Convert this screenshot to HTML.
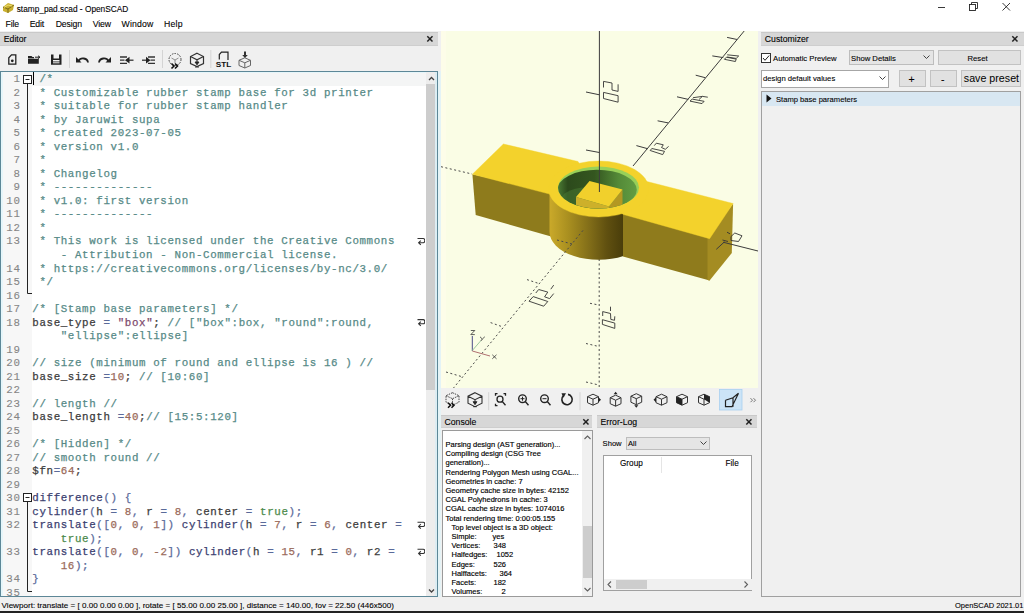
<!DOCTYPE html>
<html><head><meta charset="utf-8">
<style>
*{box-sizing:border-box}
html,body{margin:0;padding:0}
body{width:1024px;height:613px;overflow:hidden;position:relative;background:#f0f0f0;font-family:"Liberation Sans",sans-serif;color:#000}
.a{position:absolute}
.t{position:absolute;white-space:nowrap;line-height:1;font-size:8.1px;color:#000;-webkit-text-stroke:0.1px #000}
.dt{position:absolute;background:#d7d7d7;height:13.8px;border-top:1px solid #c9c9c9;border-bottom:1px solid #cecece}
.code{position:absolute;left:31.3px;top:1.3px;-webkit-text-stroke:0.25px currentColor;font-family:"Liberation Mono",monospace;font-size:10.8px;letter-spacing:0.634px;line-height:13.51px;white-space:pre;color:#3c3c3c}
.ln{position:absolute;left:0;top:1.3px;width:19.5px;text-align:right;font-family:"Liberation Mono",monospace;font-size:10.8px;letter-spacing:0.634px;line-height:13.51px;white-space:pre;color:#858585;-webkit-text-stroke:0.1px currentColor}
.c{color:#568a87}
.n{color:#9a6a5a}
.s{color:#7d4a6c}
.k{color:#3b4070}
.o{color:#5a6a9a}
.g{color:#4c8a4c}
.btn{position:absolute;background:#e1e1e1;border:1px solid #c2c2c2}
.combo{position:absolute;background:#e5e5e5;border:1px solid #bdbdbd}
.ico{position:absolute}
.con{position:absolute;left:2.5px;font-size:7.5px;white-space:nowrap;line-height:1;color:#000;-webkit-text-stroke:0.15px #000}
</style></head><body>
<!-- title + menu -->
<div class="a" style="left:0;top:0;width:1024px;height:31px;background:#fff"></div>
<svg class="a" style="left:2px;top:2px" width="13" height="12" viewBox="0 0 13 12">
<path d="M1,5 L6,1 L12,3 L11,8 L6,11 L1,9 Z" fill="#c9b030"/><path d="M1,5 L6,7 L12,3 M6,7 L6,11" stroke="#6a5a10" stroke-width="0.8" fill="none"/><path d="M2,5.5 L6,3 L10,4" stroke="#f0e070" stroke-width="1" fill="none"/></svg>
<div class="t" style="left:16.7px;top:5px;font-size:8.3px">stamp_pad.scad - OpenSCAD</div>
<div class="t" style="left:5.6px;top:19.5px;font-size:8.7px;letter-spacing:-0.15px">File</div>
<div class="t" style="left:29.7px;top:19.5px;font-size:8.7px;letter-spacing:-0.15px">Edit</div>
<div class="t" style="left:55.7px;top:19.5px;font-size:8.7px;letter-spacing:-0.15px">Design</div>
<div class="t" style="left:92.8px;top:19.5px;font-size:8.7px;letter-spacing:-0.15px">View</div>
<div class="t" style="left:121.5px;top:19.5px;font-size:8.7px;letter-spacing:0.2px">Window</div>
<div class="t" style="left:164px;top:19.5px;font-size:8.7px;letter-spacing:0.2px">Help</div>
<svg class="a" style="left:930px;top:0" width="94" height="16">
<g stroke="#222" stroke-width="0.9" fill="none">
<line x1="8" y1="7.5" x2="15" y2="7.5"/>
<rect x="39.5" y="4.5" width="6" height="6"/><path d="M41.5,4.5 V2.5 H47.5 V8.5 H45.5"/>
<path d="M72.5,3 L80,10.5 M80,3 L72.5,10.5"/>
</g></svg>

<!-- ================= EDITOR DOCK ================= -->
<div class="dt" style="left:0;top:32px;width:438px"></div>
<div class="t" style="left:3.8px;top:35.2px;font-size:8.7px">Editor</div>
<svg class="a" style="left:426px;top:35px" width="8" height="8"><path d="M1.3,1.3 L6.5,6.5 M6.5,1.3 L1.3,6.5" stroke="#222" stroke-width="1.5"/></svg>
<!-- editor toolbar -->
<svg class="a" style="left:0;top:46px" width="438" height="25" viewBox="0 46 438 25">
<g fill="#222" stroke="#222">
<!-- new -->
<path d="M11.5,54.8 H15.8 V64.1 H8.8 V57.8 Z" fill="none" stroke-width="1.3"/>
<circle cx="12.3" cy="60.8" r="1.4" stroke="none"/>
<!-- open -->
<path d="M28,56 H31.5 L32.5,57 H34 V58.2 H28 Z M28,58.8 H38.8 V63.7 H28 Z" stroke="none"/>
<path d="M35,57.2 H39.5 M38,55.8 L40,57.2 L38,58.6" fill="none" stroke-width="1"/>
<!-- save -->
<path d="M51,54.5 H53.5 V58.5 H59 V54.5 H61.5 V64.7 H51 Z" stroke="none"/>
<rect x="53" y="60" width="6.5" height="1.5" fill="#f0f0f0" stroke="none"/>
<rect x="53" y="62.3" width="6.5" height="1" fill="#f0f0f0" stroke="none"/>
</g>
<line x1="69.5" y1="50" x2="69.5" y2="68" stroke="#d4d4d4"/>
<g fill="none" stroke="#222" stroke-width="1.8">
<path d="M78.5,61 A5,4.5 0 0 1 88,62.5"/>
<path d="M108.5,61 A5,4.5 0 0 0 99,62.5"/>
</g>
<g fill="#222">
<path d="M76,57 L76,62.5 L81.5,62.5 Z"/>
<path d="M111,57 L111,62.5 L105.5,62.5 Z"/>
</g>
<g stroke="#333" stroke-width="1.3" fill="none">
<path d="M120,57 H127 M120,60.2 H124.5 M120,63.4 H127"/>
<path d="M126,60.2 H133.5"/>
</g>
<path d="M125,60.2 L129.5,56.8 V63.6 Z" fill="#222"/>
<g stroke="#333" stroke-width="1.3" fill="none">
<path d="M148,57 H155 M150.5,60.2 H155 M148,63.4 H155"/>
<path d="M142,60.2 H149"/>
</g>
<path d="M150.5,60.2 L146,56.8 V63.6 Z" fill="#222"/>
<line x1="162.5" y1="50" x2="162.5" y2="68" stroke="#d4d4d4"/>
<circle cx="175" cy="59.5" r="6" fill="none" stroke="#444" stroke-width="1" stroke-dasharray="1.6 1.1"/>
<path d="M171.5,58 L175,60 L178.5,58 M175,60 V63" fill="none" stroke="#666" stroke-width="0.7"/>
<path d="M171.5,63.5 L174,66 L171.5,68.5 M175,63.5 L177.5,66 L175,68.5" fill="none" stroke="#111" stroke-width="1.6"/>
<g fill="none" stroke="#333" stroke-width="1.2">
<path d="M197,53.2 L203.5,56.5 L203.5,63.5 L197,66.5 L190.5,63.5 L190.5,56.5 Z"/>
<path d="M190.5,56.5 L197,59.8 L203.5,56.5 M197,59.8 V63"/>
</g>
<path d="M195,62 H199 L197,64.8 Z M195,67 H199" fill="#222" stroke="#222" stroke-width="0.9"/>
<line x1="210.8" y1="50" x2="210.8" y2="68" stroke="#d4d4d4"/>
<path d="M219.3,59.5 V54.5 L221.5,52.2 H228 V60" fill="none" stroke="#222" stroke-width="1.2"/>
<text x="215.8" y="66.6" font-family="Liberation Sans" font-weight="bold" font-size="7.2" fill="#111" textLength="15.5" lengthAdjust="spacingAndGlyphs">STL</text>
<g fill="none" stroke="#666" stroke-width="1">
<path d="M244.8,57.8 L250.5,60.3 V65.5 L244.8,68 L239,65.5 V60.3 Z M239,60.3 L244.8,62.8 L250.5,60.3 M244.8,62.8 V68"/>
</g>
<path d="M244,51.5 H246 V55 H247.8 L245,58 L242.2,55 H244 Z" fill="#333"/>
</svg>

<!-- editor frame -->
<div class="a" style="left:0;top:71px;width:438px;height:526px;border:1px solid #5d8797;background:#fff;overflow:hidden">
<div class="a" style="left:0;top:0;width:436px;height:2px;background:#e6f6fa"></div>
<div class="a" style="left:0;top:0;width:2px;height:524px;background:#e6f6fa"></div>
<div class="a" style="left:2px;top:0;width:29px;height:524px;background:#f7f7f7"></div>
<div class="a" style="left:31px;top:1px;width:394px;height:13px;background:#f4f5f5"></div>
<div class="ln">1
2
3
4
5
6
7
8
9
10
11
12
13

14
15
16
17
18

19
20
21
22
23
24
25
26
27
28
29
30
31
32

33

34
35</div>
<div class="code"><span class="c"> /*</span>
<span class="c"> * Customizable rubber stamp base for 3d printer</span>
<span class="c"> * suitable for rubber stamp handler</span>
<span class="c"> * by Jaruwit supa</span>
<span class="c"> * created 2023-07-05</span>
<span class="c"> * version v1.0</span>
<span class="c"> *</span>
<span class="c"> * Changelog</span>
<span class="c"> * --------------</span>
<span class="c"> * v1.0: first version</span>
<span class="c"> * --------------</span>
<span class="c"> *</span>
<span class="c"> * This work is licensed under the Creative Commons</span>
<span class="c">    - Attribution - Non-Commercial license.</span>
<span class="c"> * https://creativecommons.org/licenses/by-nc/3.0/</span>
<span class="c"> */</span>

<span class="c">/* [Stamp base parameters] */</span>
base_type <span class="o">=</span> <span class="s">"box"</span>;<span class="c"> // ["box":box, "round":round,</span>
<span class="c">    "ellipse":ellipse]</span>

<span class="c">// size (minimum of round and ellipse is 16 ) //</span>
base_size <span class="o">=</span><span class="n">10</span>;<span class="c"> // [10:60]</span>

<span class="c">// length //</span>
base_length <span class="o">=</span><span class="n">40</span>;<span class="c">// [15:5:120]</span>

<span class="c">/* [Hidden] */</span>
<span class="c">// smooth round //</span>
$fn<span class="o">=</span><span class="n">64</span>;

<span class="k">difference</span><span class="o">() {</span>
<span class="k">cylinder</span><span class="o">(</span>h <span class="o">=</span> <span class="n">8</span><span class="o">,</span> r <span class="o">=</span> <span class="n">8</span><span class="o">,</span> center <span class="o">=</span> <span class="g">true</span><span class="o">);</span>
<span class="k">translate</span><span class="o">([</span><span class="n">0</span><span class="o">,</span> <span class="n">0</span><span class="o">,</span> <span class="n">1</span><span class="o">]) </span><span class="k">cylinder</span><span class="o">(</span>h <span class="o">=</span> <span class="n">7</span><span class="o">,</span> r <span class="o">=</span> <span class="n">6</span><span class="o">,</span> center <span class="o">=</span>
    <span class="g">true</span><span class="o">);</span>
<span class="k">translate</span><span class="o">([</span><span class="n">0</span><span class="o">,</span> <span class="n">0</span><span class="o">,</span> <span class="n">-2</span><span class="o">]) </span><span class="k">cylinder</span><span class="o">(</span>h <span class="o">=</span> <span class="n">15</span><span class="o">,</span> r1 <span class="o">=</span> <span class="n">0</span><span class="o">,</span> r2 <span class="o">=</span>
    <span class="n">16</span><span class="o">);</span>
<span class="o">}</span>
</div>
<div class="a" style="left:32px;top:0px;width:1px;height:13px;background:#000"></div>
<svg class="a" style="left:0;top:0" width="424" height="524">
<g stroke="#222" fill="none" stroke-width="1">
<rect x="22.5" y="3.5" width="8" height="8" fill="#fff"/>
<line x1="24.5" y1="7.5" x2="28.5" y2="7.5"/>
<line x1="26.5" y1="11.5" x2="26.5" y2="221.5"/>
<line x1="26.5" y1="221.5" x2="31" y2="221.5"/>
<rect x="22.5" y="421.5" width="8" height="8" fill="#fff"/>
<line x1="24.5" y1="425.5" x2="28.5" y2="425.5"/>
<line x1="26.5" y1="429.5" x2="26.5" y2="519.5"/>
<line x1="26.5" y1="519.5" x2="31" y2="519.5"/>
</g>
<g fill="none" stroke="#333" stroke-width="1.1">
<path d="M416.5,166.52 H422.3 Q423.8,166.52 423.8,168.62 Q423.8,170.72 422.3,170.72 H417.6 M419.8,168.52 L417.6,170.72 L419.8,172.92"/>
<path d="M416.5,247.58 H422.3 Q423.8,247.58 423.8,249.68 Q423.8,251.78 422.3,251.78 H417.6 M419.8,249.58 L417.6,251.78 L419.8,253.98"/>
<path d="M416.5,450.23 H422.3 Q423.8,450.23 423.8,452.33 Q423.8,454.43 422.3,454.43 H417.6 M419.8,452.23 L417.6,454.43 L419.8,456.63"/>
<path d="M416.5,477.25 H422.3 Q423.8,477.25 423.8,479.35 Q423.8,481.45 422.3,481.45 H417.6 M419.8,479.25 L417.6,481.45 L419.8,483.65"/>
</g>
</svg>
<!-- scrollbar -->
<div class="a" style="left:424.8px;top:0;width:9.5px;height:524px;background:#ededed"></div>
<div class="a" style="left:434.3px;top:0;width:2.7px;height:524px;background:#dcedf3"></div>
<div class="a" style="left:424.8px;top:12px;width:9.5px;height:306px;background:#cdcdcd"></div>
<svg class="a" style="left:423.5px;top:0" width="13" height="524">
<path d="M4,8 L6.5,5.5 L9,8" fill="none" stroke="#444" stroke-width="1.3"/>
<path d="M4,517.5 L6.5,520 L9,517.5" fill="none" stroke="#444" stroke-width="1.3"/>
</svg>
</div>

<!-- ================= VIEWER ================= -->
<div class="a" style="left:438px;top:71px;width:3px;height:526px;background:#e4f3f6"></div>
<svg class="a" style="left:441px;top:31px" width="317" height="357" viewBox="441 31 317 357">
<defs>
<linearGradient id="cyl" x1="549" y1="0" x2="624" y2="0" gradientUnits="userSpaceOnUse">
<stop offset="0" stop-color="#cbaa2a"/>
<stop offset="0.25" stop-color="#aa9020"/>
<stop offset="0.55" stop-color="#806c18"/>
<stop offset="0.77" stop-color="#605010"/>
<stop offset="1" stop-color="#483c0a"/>
</linearGradient>
<linearGradient id="hole" x1="558" y1="0" x2="639" y2="0" gradientUnits="userSpaceOnUse">
<stop offset="0" stop-color="#4a7a34"/>
<stop offset="0.12" stop-color="#2c4a1c"/>
<stop offset="0.45" stop-color="#34561f"/>
<stop offset="0.75" stop-color="#548a38"/>
<stop offset="1" stop-color="#64a044"/>
</linearGradient>
</defs>
<rect x="441" y="31" width="317" height="357" fill="#fafde5"/>
<rect x="441" y="31" width="5" height="357" fill="#fdfde9"/>
<!-- negative axes dotted (behind) -->
<g stroke="#4a4a4a" stroke-width="1" stroke-dasharray="2 2.5" fill="none">
<line x1="441" y1="166.7" x2="472" y2="174"/>
<line x1="599.2" y1="259" x2="599.2" y2="388"/>
<line x1="590" y1="303.3" x2="598.8" y2="305"/>
<line x1="586" y1="343.5" x2="598.8" y2="346.5"/>
<line x1="586" y1="382" x2="598.8" y2="385"/>
</g>
<!-- left box front face -->
<polygon points="472.4,174.2 552,192.5 552,236.8 475.7,215" fill="#8e7b1c"/>
<!-- cylinder side -->
<path d="M549.5,185 L549.5,231.5 A49.2,28 0 0 0 623.5,256 L623.5,205 Z" fill="url(#cyl)"/>
<!-- right box front face -->
<polygon points="623,212 709.6,236 709.6,280.5 623,256.5" fill="#8f7b1c"/>
<!-- right box end face -->
<polygon points="707.5,238 733.1,203.5 731.8,253 709.6,280.5 707.5,280" fill="#a48c22"/>
<!-- top faces -->
<g fill="#f3d22c" stroke="#f3d22c" stroke-width="0.4">
<polygon points="503.4,144 578,161.5 600,200 548.5,193.8 472.4,174.2"/>
<polygon points="641,180 733.1,203.5 709.6,238.7 623.5,214.5 600,200"/>
<ellipse cx="598.7" cy="189" rx="50" ry="28"/>
</g>
<!-- hole -->
<clipPath id="hc"><ellipse cx="598.5" cy="187.6" rx="40.5" ry="21"/></clipPath>
<ellipse cx="598.5" cy="187.6" rx="40.5" ry="21" fill="#98d058"/>
<g clip-path="url(#hc)"><ellipse cx="597" cy="189.8" rx="39.8" ry="20" fill="url(#hole)"/>
<ellipse cx="592" cy="198" rx="30" ry="11" fill="#4e8038" opacity="0.45"/></g>
<g clip-path="url(#hc)">
<polygon points="576,197 609,206.5 609,222 576,213" fill="#cdb02a"/>
<polygon points="609,206.5 622.5,189.5 622.5,216 609,222" fill="#b39822"/>
<polygon points="576,197 589.5,181 622.5,189.5 609,206.5" fill="#f1d02c"/>
</g>
<!-- positive axes -->
<g stroke="#3c3c3c" stroke-width="1" fill="none">
<line x1="599.4" y1="31" x2="599.4" y2="192"/>
<line x1="586" y1="92" x2="599.4" y2="94.8"/>
<line x1="586" y1="150" x2="599.4" y2="152.5"/>
<line x1="633" y1="166" x2="745" y2="30"/>
<line x1="636.4" y1="145.6" x2="648" y2="148.8"/>
<line x1="657.6" y1="120.8" x2="668.2" y2="122.9"/>
<line x1="677" y1="96.8" x2="688.3" y2="99.4"/>
<line x1="695.7" y1="75.2" x2="705.3" y2="77.7"/>
<line x1="712.3" y1="55.9" x2="723.3" y2="57.6"/>
<line x1="727.1" y1="37.4" x2="737.1" y2="39.5"/>
<line x1="723" y1="242.2" x2="758" y2="251"/>
<line x1="716.3" y1="249.3" x2="724.5" y2="241.8"/>
</g>
<!-- labels -->
<g stroke="#333" stroke-width="0.9" fill="none" stroke-linejoin="miter">
<path d="M603.5,87.5 L603.5,81.4 L612,83 L612,90 L618.1,91.4 L618.1,84.3 M603.5,92.4 L618.1,95.7 L618.1,102.2 L603.5,98.5 Z"/>
<path d="M650.2,150.5 L651.8,148.5 L664.5,151.3 L662.7,154.6 Z M654.3,145.6 L656.3,143.2 L663.3,144.8 L661.5,147.5 L665.3,149.3 L668.6,146.4"/>
<path d="M690,101.1 L692.2,99.1 L704.1,101.3 L702,103.6 Z M693,97.7 L702.4,96.4 L707.8,97.2 M699,99.5 L702.4,96.4"/>
<path d="M724.4,59.3 L726.4,57.2 L736.2,59.1 L735.4,61.5 Z M727.2,54.8 L738.7,56 L736.2,58.4 L727.2,57"/>
<path d="M731,236.5 L734.8,233 L742,235.8 L738.5,241.5 L731,240.5 Z M727,232.2 L730,233.8 M722.5,240 L728,241.5"/>
<path d="M529,301.2 L533.2,296.6 L547.8,301.5 L543.7,306.2 Z M535.8,293 L538.7,289.5 L547.8,292.1 L544.6,296.8 L549.6,298.6 L553.7,293.6 M550.8,289.2 L553.7,285.1"/>
<path d="M610.5,306.7 L610.5,311 M602.7,316 L602.7,311.6 L610.5,313.5 L610.8,319.4 L614.5,320.3 L614.8,316.3 M602.4,319.7 L614.8,323.1 L614.8,328.4 L602.4,324.4 Z"/>
</g>
<!-- -Y dotted (front) -->
<g stroke="#4a4a4a" stroke-width="1" stroke-dasharray="2 2.5" fill="none">
<line x1="583" y1="230.4" x2="453.5" y2="388"/>
<line x1="557" y1="240" x2="572" y2="244"/>
<line x1="527" y1="279.6" x2="538.8" y2="283.5"/>
<line x1="490.6" y1="322.6" x2="503" y2="327"/>
<line x1="446" y1="372" x2="463" y2="377"/>
</g>
<!-- axes indicator -->
<g stroke-width="1" fill="none">
<line x1="472.3" y1="351" x2="472.3" y2="336" stroke="#4a4a88"/>
<line x1="472.3" y1="350.5" x2="481" y2="340.5" stroke="#9cc89c"/>
<line x1="472.3" y1="351" x2="490" y2="356" stroke="#b07070"/>
</g>
<g stroke="#333" stroke-width="0.8" fill="none">
<path d="M470.8,330.5 L474.8,330.5 L470.8,334.6 L474.8,334.6"/>
<path d="M480,336.8 L482.3,339 L484.8,336.8 M482.3,339 L480.8,341"/>
<path d="M492.3,354.8 L496.5,358.8 M496.5,354.8 L492.3,358.8"/>
</g>
</svg>

<!-- viewer toolbar -->
<svg class="a" style="left:441px;top:388px" width="317" height="25" viewBox="441 388 317 25">
<rect x="441" y="388" width="317" height="25" fill="#f0f0f0"/>
<rect x="719.5" y="389.5" width="22.5" height="20.5" fill="#cce4f7" stroke="#a8d0f0" stroke-width="0.8"/>
<g transform="translate(0,1.2)">
<!-- preview -->
<g fill="none" stroke="#333" stroke-width="0.9" stroke-dasharray="1.5 1">
<path d="M452.5,391.5 L459,394.5 L459,401 L452.5,404 L446,401 L446,394.5 Z M446,394.5 L452.5,397.5 L459,394.5 M452.5,397.5 V404"/>
</g>
<path d="M448,401.5 L450.5,404 L448,406.5 M451.5,401.5 L454,404 L451.5,406.5" fill="none" stroke="#111" stroke-width="1.5"/>
<!-- render -->
<g fill="none" stroke="#333" stroke-width="1.1">
<path d="M475,391.5 L482,395 L482,402 L475,405.5 L468,402 L468,395 Z M468,395 L475,398.5 L482,395 M475,398.5 V402"/>
</g>
<path d="M473,400.5 H477 L475,403.5 Z M473,405.5 H477" fill="#222" stroke="#222" stroke-width="0.8"/>
<line x1="488.7" y1="391" x2="488.7" y2="409" stroke="#d4d4d4"/>
<!-- view all -->
<g fill="none" stroke="#222" stroke-width="1.3">
<path d="M495.5,394.5 V392.5 H497.5 M503.5,392.5 H505.5 V394.5 M495.5,402.5 V404.5 H497.5"/>
<circle cx="500" cy="398" r="3"/>
<path d="M502.3,400.3 L505.5,404"/>
</g>
<!-- zoom in -->
<g fill="none" stroke="#222" stroke-width="1.4">
<circle cx="522.5" cy="397.5" r="3.8"/>
<path d="M525.3,400.3 L528.5,404"/>
<path d="M520.5,397.5 H524.5 M522.5,395.5 V399.5" stroke-width="1"/>
</g>
<!-- zoom out -->
<g fill="none" stroke="#222" stroke-width="1.4">
<circle cx="544.5" cy="397.5" r="3.8"/>
<path d="M547.3,400.3 L550.5,404"/>
<path d="M542.5,397.5 H546.5" stroke-width="1"/>
</g>
<!-- reset -->
<path d="M563.5,394.5 A5.2,5.2 0 1 0 568,393.2" fill="none" stroke="#222" stroke-width="1.6"/>
<path d="M561.5,392 L566,392 L563.5,396.5 Z" fill="#222"/>
<line x1="580" y1="391" x2="580" y2="409" stroke="#d4d4d4"/>
<!-- view cubes -->
<g fill="none" stroke="#333" stroke-width="1">
<path d="M593,393 L598.5,395.5 V401.5 L593,404 L587.5,401.5 V395.5 Z M587.5,395.5 L593,398 L598.5,395.5 M593,398 V404"/>
<path d="M615.6,394 L621,396.5 V402.5 L615.6,405 L610.2,402.5 V396.5 Z M610.2,396.5 L615.6,399 L621,396.5 M615.6,399 V405"/>
<path d="M636.3,392.5 L641.7,395 V401 L636.3,403.5 L630.9,401 V395 Z M630.9,395 L636.3,397.5 L641.7,395 M636.3,397.5 V403.5"/>
<path d="M661.5,393 L667,395.5 V401.5 L661.5,404 L656,401.5 V395.5 Z M656,395.5 L661.5,398 L667,395.5 M661.5,398 V404"/>
<path d="M682,393 L687.5,395.5 V401.5 L682,404 L676.5,401.5 V395.5 Z M676.5,395.5 L682,398 L687.5,395.5 M682,398 V404"/>
<path d="M704,393 L709.5,395.5 V401.5 L704,404 L698.5,401.5 V395.5 Z M698.5,395.5 L704,398 L709.5,395.5 M704,398 V404"/>
</g>
<path d="M598.5,396 L601,398.5 L598.5,401 Z" fill="#222"/>
<path d="M613.6,393 L615.6,390.5 L617.6,393 Z" fill="#222"/>
<path d="M634.3,404 L636.3,406.5 L638.3,404 Z" fill="#222"/>
<path d="M656,396 L653.5,398.5 L656,401 Z" fill="#222"/>
<path d="M676.5,395.5 L682,398 V404 L676.5,401.5 Z" fill="#222"/>
<path d="M704,393 L709.5,395.5 V401.5 L704,398 Z" fill="#222"/>
<!-- perspective highlighted -->
<g fill="none" stroke="#222" stroke-width="1.2">
<path d="M725.5,399 L733,396.5 L738.5,392 M725.5,399 V405.5 L732,405.5 L738.5,392 M733,396.5 V405.5"/>
</g>
<path d="M750.5,397 L752.5,399 L750.5,401 M753.5,397 L755.5,399 L753.5,401" fill="none" stroke="#555" stroke-width="0.8"/>
</g>
</svg>

<!-- ================= CONSOLE ================= -->
<div class="dt" style="left:441px;top:414.5px;width:151px"></div>
<div class="t" style="left:444.5px;top:417.5px;font-size:8.7px">Console</div>
<svg class="a" style="left:581.5px;top:418px" width="8" height="8"><path d="M1.3,1.3 L6.5,6.5 M6.5,1.3 L1.3,6.5" stroke="#222" stroke-width="1.5"/></svg>
<div class="a" style="left:442px;top:430px;width:151px;height:167px;background:#fff;border:1px solid #9a9a9a;overflow:hidden">
<div class="con" style="top:10.0px">Parsing design (AST generation)...</div>
<div class="con" style="top:19.2px">Compiling design (CSG Tree</div>
<div class="con" style="top:28.4px">generation)...</div>
<div class="con" style="top:37.6px">Rendering Polygon Mesh using CGAL...</div>
<div class="con" style="top:46.8px">Geometries in cache: 7</div>
<div class="con" style="top:56.0px">Geometry cache size in bytes: 42152</div>
<div class="con" style="top:65.2px">CGAL Polyhedrons in cache: 3</div>
<div class="con" style="top:74.4px">CGAL cache size in bytes: 1074016</div>
<div class="con" style="top:83.6px">Total rendering time: 0:00:05.155</div>
<div class="con" style="top:92.8px;left:8.5px">Top level object is a 3D object:</div>
<div class="con" style="top:102.0px;left:8.5px">Simple:</div><div class="con" style="top:102.0px;left:49.5px">yes</div>
<div class="con" style="top:111.2px;left:8.5px">Vertices:</div><div class="con" style="top:111.2px;left:50.5px">348</div>
<div class="con" style="top:120.4px;left:8.5px">Halfedges:</div><div class="con" style="top:120.4px;left:53.5px">1052</div>
<div class="con" style="top:129.6px;left:8.5px">Edges:</div><div class="con" style="top:129.6px;left:50.5px">526</div>
<div class="con" style="top:138.8px;left:8.5px">Halffacets:</div><div class="con" style="top:138.8px;left:56.5px">364</div>
<div class="con" style="top:148.0px;left:8.5px">Facets:</div><div class="con" style="top:148.0px;left:50.5px">182</div>
<div class="con" style="top:157.2px;left:8.5px">Volumes:</div><div class="con" style="top:157.2px;left:58.5px">2</div>
<div class="a" style="left:139px;top:0;width:11px;height:165px;background:#f0f0f0"></div>
<div class="a" style="left:140px;top:95px;width:9px;height:52px;background:#cdcdcd"></div>
<svg class="a" style="left:139px;top:0" width="11" height="165">
<path d="M2.5,8 L5.5,5 L8.5,8" fill="none" stroke="#606060" stroke-width="1.1"/>
<path d="M2.5,157 L5.5,160 L8.5,157" fill="none" stroke="#606060" stroke-width="1.1"/>
</svg>
</div>

<!-- ================= ERROR LOG ================= -->
<div class="dt" style="left:597px;top:414.5px;width:160px"></div>
<div class="t" style="left:600.5px;top:417.5px;font-size:8.7px">Error-Log</div>
<svg class="a" style="left:745px;top:418px" width="8" height="8"><path d="M1.3,1.3 L6.5,6.5 M6.5,1.3 L1.3,6.5" stroke="#222" stroke-width="1.5"/></svg>
<div class="t" style="left:602.6px;top:439.5px;font-size:7.6px">Show</div>
<div class="combo" style="left:625.7px;top:436.5px;width:84px;height:13.5px"></div>
<div class="t" style="left:628px;top:439.5px;font-size:7.6px">All</div>
<svg class="a" style="left:699px;top:439px" width="9" height="8"><path d="M1.5,2.5 L4.5,5.5 L7.5,2.5" fill="none" stroke="#444" stroke-width="1"/></svg>
<div class="a" style="left:603px;top:454.5px;width:148.5px;height:136px;background:#fff;border:1px solid #a0a0a0">
<div class="a" style="left:57px;top:1px;width:1px;height:16px;background:#e5e5e5"></div>
<div class="t" style="left:16px;top:4.8px;font-size:8.2px">Group</div>
<div class="t" style="left:121.5px;top:4.8px;font-size:8.2px">File</div>
<div class="a" style="left:0;top:123px;width:147.5px;height:11px;background:#f0f0f0"></div>
<div class="a" style="left:12px;top:124px;width:31px;height:9px;background:#cdcdcd"></div>
<svg class="a" style="left:0;top:123px" width="148" height="11">
<path d="M7,2.5 L4,5.5 L7,8.5" fill="none" stroke="#606060" stroke-width="1.1"/>
<path d="M140.5,2.5 L143.5,5.5 L140.5,8.5" fill="none" stroke="#606060" stroke-width="1.1"/>
</svg>
</div>

<!-- ================= CUSTOMIZER ================= -->
<div class="dt" style="left:761px;top:32px;width:263px"></div>
<div class="t" style="left:764.8px;top:35.2px;font-size:8.7px">Customizer</div>
<svg class="a" style="left:1011px;top:35px" width="8" height="8"><path d="M1.3,1.3 L6.5,6.5 M6.5,1.3 L1.3,6.5" stroke="#222" stroke-width="1.5"/></svg>
<div class="a" style="left:761px;top:53px;width:9.5px;height:9.5px;background:#fff;border:1px solid #333"></div>
<svg class="a" style="left:761px;top:53px" width="10" height="10"><path d="M2,5 L4,7.3 L8.2,2.5" fill="none" stroke="#222" stroke-width="1"/></svg>
<div class="t" style="left:773px;top:54.5px;font-size:7.7px">Automatic Preview</div>
<div class="combo" style="left:848.5px;top:50px;width:85px;height:15px"></div>
<div class="t" style="left:851px;top:54.5px;font-size:7.7px">Show Details</div>
<svg class="a" style="left:922px;top:53px" width="9" height="8"><path d="M1.5,2.5 L4.5,5.5 L7.5,2.5" fill="none" stroke="#444" stroke-width="1"/></svg>
<div class="btn" style="left:937.5px;top:50px;width:83px;height:15px"></div>
<div class="t" style="left:967.5px;top:54.5px;font-size:7.7px">Reset</div>
<div class="a" style="left:761px;top:69.5px;width:128px;height:18px;background:#fff;border:1px solid #a6a6a6"></div>
<div class="t" style="left:763px;top:74.5px;font-size:7.7px">design default values</div>
<svg class="a" style="left:878px;top:74px" width="9" height="8"><path d="M1.5,2.5 L4.5,5.5 L7.5,2.5" fill="none" stroke="#444" stroke-width="1"/></svg>
<div class="btn" style="left:898.8px;top:70px;width:27px;height:17px"></div>
<div class="t" style="left:908.5px;top:73.5px;font-size:10.5px">+</div>
<div class="btn" style="left:930px;top:70px;width:27px;height:17px"></div>
<div class="t" style="left:941px;top:73.5px;font-size:10.5px">-</div>
<div class="btn" style="left:961px;top:70px;width:59.5px;height:17px"></div>
<div class="t" style="left:963.8px;top:73.3px;font-size:10.7px;-webkit-text-stroke:0">save preset</div>
<div class="a" style="left:761px;top:90.5px;width:260px;height:506px;border:1px solid #a0a0a0;background:#f0f0f0"></div>
<div class="a" style="left:762px;top:91.5px;width:258px;height:14px;background:#d8e7f2"></div>
<svg class="a" style="left:765.2px;top:94px" width="8" height="9"><path d="M1.5,0.5 L6.5,4.5 L1.5,8.5 Z" fill="#111"/></svg>
<div class="t" style="left:776px;top:95.5px;font-size:7.6px">Stamp base parameters</div>

<!-- ================= STATUS ================= -->
<div class="t" style="left:1.6px;top:601.5px;font-size:8.09px">Viewport: translate = [ 0.00 0.00 0.00 ], rotate = [ 55.00 0.00 25.00 ], distance = 140.00, fov = 22.50 (446x500)</div>
<div class="t" style="left:955px;top:601.5px;font-size:7.5px">OpenSCAD 2021.01</div>
<div class="a" style="left:0;top:611px;width:1024px;height:2px;background:#222"></div>
</body></html>
